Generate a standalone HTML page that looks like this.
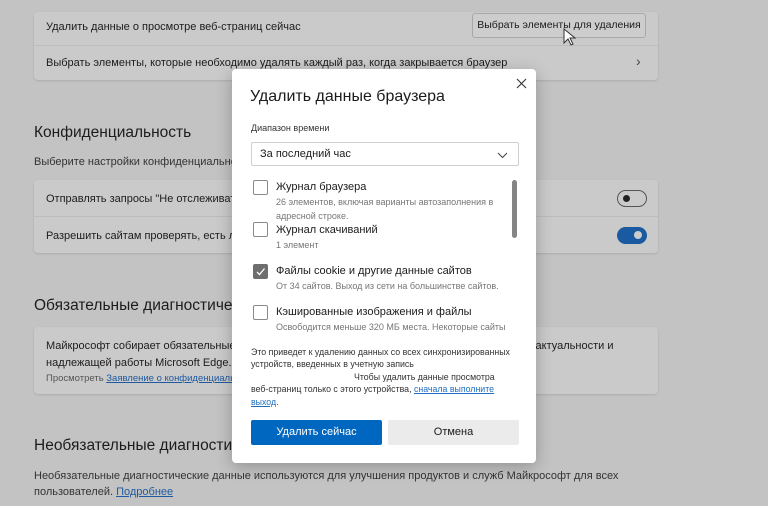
<!DOCTYPE html>
<html><head><meta charset="utf-8"><style>
*{box-sizing:border-box;margin:0;padding:0}
body{width:768px;height:506px;overflow:hidden;background:#c3c3c3;font-family:"Liberation Sans","DejaVu Sans",sans-serif;color:#1c1c1c;position:relative}
.a{position:absolute;white-space:nowrap}
.card{position:absolute;left:34px;width:624px;background:#cacaca;border-radius:4px;box-shadow:0 1px 2px rgba(0,0,0,.12)}
.t{font-size:11px}
.h{font-size:15.5px}
.sep{position:absolute;left:34px;width:624px;height:1px;background:#bdbdbd}
.dlg{position:absolute;left:232px;top:69px;width:304px;height:394px;background:#fff;border-radius:4px;box-shadow:0 4px 16px rgba(0,0,0,.25)}
.cb{position:absolute;left:21px;width:15px;height:15px;border:1px solid #8a8a8a;border-radius:2px;background:#fff}
.it{position:absolute;left:44px;font-size:11px;color:#1b1b1b;white-space:nowrap}
.ds{position:absolute;left:44px;font-size:9px;color:#767676;white-space:nowrap;line-height:14px}
.lnk{color:#1f5aa0;text-decoration:underline}
</style></head><body>
<div class="card" style="top:12px;height:68px"></div>
<div class="sep" style="top:45px"></div>
<div class="a t" style="left:46px;top:21px">Удалить данные о просмотре веб-страниц сейчас</div>
<div class="a" style="left:472px;top:13px;width:174px;height:25px;border:1px solid #a8a8a8;border-radius:3px;background:#cdcdcd;font-size:10.5px;text-align:center;line-height:23px">Выбрать элементы для удаления</div>
<div class="a t" style="left:46px;top:57px">Выбрать элементы, которые необходимо удалять каждый раз, когда закрывается браузер</div>
<div class="a" style="left:636px;top:53px;font-size:14px;color:#444">›</div>
<svg class="a" style="left:563px;top:28px" width="14" height="18" viewBox="0 0 14 18"><path d="M1 1v14l4-4 3 6 2-1-3-6h5z" fill="#fff" stroke="#333" stroke-width="1"/></svg>

<div class="a h" style="left:34px;top:124px">Конфиденциальность</div>
<div class="a t" style="left:34px;top:156px;color:#333">Выберите настройки конфиденциальности</div>
<div class="card" style="top:180px;height:73px"></div>
<div class="sep" style="top:216px"></div>
<div class="a t" style="left:46px;top:193px">Отправлять запросы "Не отслеживать"</div>
<div class="a t" style="left:46px;top:230px">Разрешить сайтам проверять, есть ли</div>
<div class="a" style="left:617px;top:190px;width:30px;height:17px;border:1px solid #555;border-radius:9px"><div style="position:absolute;left:5px;top:4px;width:7px;height:7px;border-radius:50%;background:#222"></div></div>
<div class="a" style="left:617px;top:227px;width:30px;height:17px;background:#1a5aa0;border-radius:9px"><div style="position:absolute;right:5px;top:4px;width:8px;height:8px;border-radius:50%;background:#ccc"></div></div>

<div class="a h" style="left:34px;top:297px">Обязательные диагностические данные</div>
<div class="card" style="top:327px;height:67px"></div>
<div class="a t" style="left:46px;top:340px">Майкрософт собирает обязательные диагностические данные для обеспечения безопасности, актуальности и</div>
<div class="a t" style="left:46px;top:357px">надлежащей работы Microsoft Edge.</div>
<div class="a" style="left:46px;top:373px;font-size:9.5px;color:#555">Просмотреть <span class="lnk">Заявление о конфиденциальности</span></div>

<div class="a h" style="left:34px;top:437px">Необязательные диагностические данные</div>
<div class="a t" style="left:34px;top:470px;color:#333">Необязательные диагностические данные используются для улучшения продуктов и служб Майкрософт для всех</div>
<div class="a t" style="left:34px;top:486px;color:#333">пользователей. <span class="lnk">Подробнее</span></div>

<div class="dlg">
<div class="a" style="left:18px;top:19px;font-size:16px;color:#1b1b1b">Удалить данные браузера</div>
<svg class="a" style="left:284px;top:9px" width="11" height="11" viewBox="0 0 11 11"><path d="M1 1l9 9M10 1l-9 9" stroke="#333" stroke-width="1.1"/></svg>
<div class="a" style="left:19px;top:54px;font-size:9px;color:#333">Диапазон времени</div>
<div class="a" style="left:19px;top:73px;width:268px;height:24px;border:1px solid #d0d0d0;border-radius:2px"><div style="position:absolute;left:8px;top:5px;font-size:11px">За последний час</div><svg style="position:absolute;right:10px;top:9px" width="11" height="7" viewBox="0 0 11 7"><path d="M1 1l4.5 4.5L10 1" fill="none" stroke="#444" stroke-width="1"/></svg></div>
<div class="a" style="left:280px;top:111px;width:5px;height:58px;background:#858585;border-radius:3px"></div>
<div class="cb" style="top:111px"></div>
<div class="it" style="top:112px">Журнал браузера</div>
<div class="ds" style="top:126px">26 элементов, включая варианты автозаполнения в<br>адресной строке.</div>
<div class="cb" style="top:153px"></div>
<div class="it" style="top:155px">Журнал скачиваний</div>
<div class="ds" style="top:169px">1 элемент</div>
<div class="cb" style="top:195px;background:#6e6e6e;border-color:#6e6e6e"><svg width="13" height="13" viewBox="0 0 13 13" style="position:absolute;left:0;top:0"><path d="M3 7l2.5 2.5L10.5 3.5" fill="none" stroke="#fff" stroke-width="1.3"/></svg></div>
<div class="it" style="top:196px">Файлы cookie и другие данные сайтов</div>
<div class="ds" style="top:210px">От 34 сайтов. Выход из сети на большинстве сайтов.</div>
<div class="cb" style="top:236px"></div>
<div class="it" style="top:237px">Кэшированные изображения и файлы</div>
<div class="ds" style="top:251px">Освободится меньше 320 МБ места. Некоторые сайты</div>
<div class="a" style="left:19px;top:277px;font-size:8.8px;line-height:12.4px;color:#333">Это приведет к удалению данных со всех синхронизированных<br>устройств, введенных в учетную запись<br><span style="padding-left:103px">Чтобы удалить данные просмотра</span><br>веб-страниц только с этого устройства, <span class="lnk" style="color:#1f6fc0">сначала выполните</span><br><span class="lnk" style="color:#1f6fc0">выход</span>.</div>
<div class="a" style="left:19px;top:351px;width:131px;height:25px;background:#0067c0;border-radius:2px;color:#fff;font-size:11px;text-align:center;line-height:25px">Удалить сейчас</div>
<div class="a" style="left:156px;top:351px;width:131px;height:25px;background:#ebebeb;border-radius:2px;color:#1b1b1b;font-size:11px;text-align:center;line-height:25px">Отмена</div>
</div>
</body></html>
